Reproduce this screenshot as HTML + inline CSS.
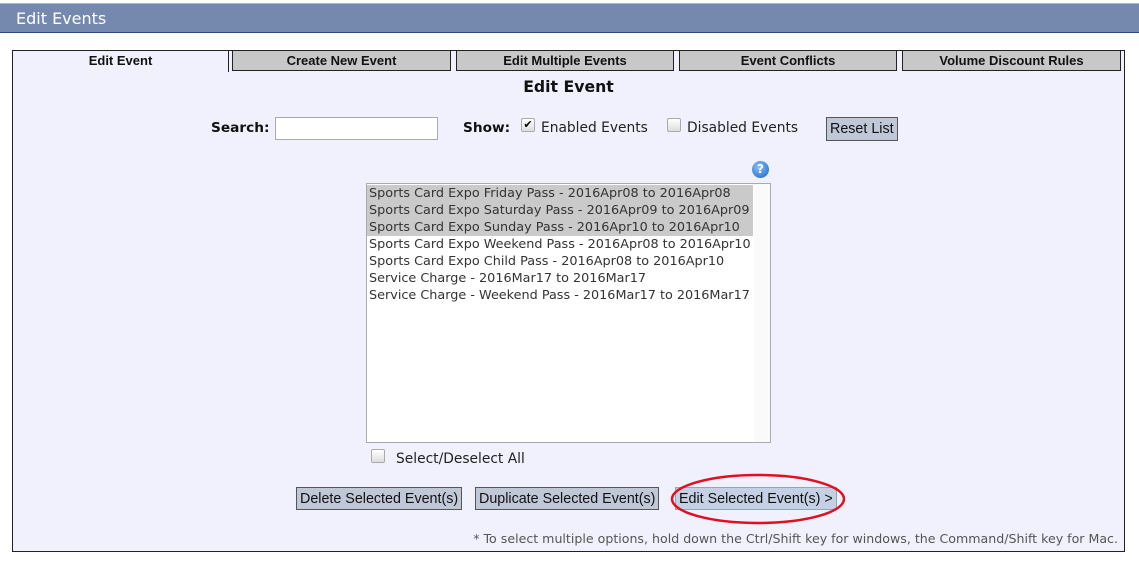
<!DOCTYPE html>
<html><head><style>
body{margin:0;width:1139px;height:573px;background:#fff;position:relative;font-family:"DejaVu Sans",Verdana,sans-serif;overflow:hidden}
.a{position:absolute}
.hdr{left:0;top:3px;width:1139px;height:30px;background:#7589ae;border-bottom:1px solid #2a4a7a;border-top:1px solid #aab6cc;color:#fff;font-size:16px;line-height:30px;box-sizing:border-box;padding-left:16px}
.panel{left:12px;top:50px;width:1113px;height:502px;background:#f1f1fd;border:1px solid #222;box-sizing:border-box}
.tab{top:50px;height:21px;background:#c8c8c8;border:1px solid #222;box-sizing:border-box;font-family:"Liberation Sans",Arial,sans-serif;font-weight:bold;font-size:13px;text-align:center;line-height:19px;color:#111}
.act{background:#f1f1fd;border-bottom:none;height:22px}
.btn{background:#c0c8d8;border:1px solid #555;font-family:"Liberation Sans",Arial,sans-serif;font-size:14.3px;height:23px;line-height:21px;box-sizing:border-box;padding:0 3px;color:#111}
.cb{width:12px;height:12px;border:1px solid #aaa;border-radius:2px;background:linear-gradient(#fff,#ddd)}
.t{font-size:13.8px;color:#222}
</style></head><body>
<div class="a hdr">Edit Events</div>
<div class="a panel"></div>
<div class="a tab act" style="left:12px;width:217px">Edit Event</div>
<div class="a tab" style="left:232px;width:219px">Create New Event</div>
<div class="a tab" style="left:456px;width:218px">Edit Multiple Events</div>
<div class="a tab" style="left:679px;width:218px">Event Conflicts</div>
<div class="a tab" style="left:902px;width:219px">Volume Discount Rules</div>
<div class="a" style="left:12px;width:1113px;top:77px;text-align:center;font-weight:bold;font-size:15.7px;color:#111">Edit Event</div>
<div class="a" style="left:211px;top:120px;font-weight:bold;font-size:13.7px;color:#111">Search:</div>
<div class="a" style="left:275px;top:117px;width:163px;height:23px;border:1px solid #aaa;background:#fff;box-sizing:border-box"></div>
<div class="a" style="left:463px;top:120px;font-weight:bold;font-size:13.7px;color:#111">Show:</div>
<div class="a cb" style="left:521px;top:118px;font-size:11px;line-height:12px;text-align:center">✔</div>
<div class="a t" style="left:541px;top:120px">Enabled Events</div>
<div class="a cb" style="left:667px;top:118px"></div>
<div class="a t" style="left:687px;top:120px">Disabled Events</div>
<div class="a btn" style="left:826px;top:117px;height:24px;line-height:23px">Reset List</div>
<div class="a" style="left:752px;top:161px;width:17px;height:17px;border-radius:50%;background:radial-gradient(circle at 40% 35%,#8ac0ff,#1a5fc0);color:#fff;font-size:12px;font-weight:bold;text-align:center;line-height:17px">?</div>
<div class="a" style="left:366px;top:183px;width:405px;height:260px;border:1px solid #aaa;background:#fff;box-sizing:border-box;font-size:12.8px;color:#333;line-height:17px;overflow:hidden;padding-top:1px">
<div style="background:#cacaca;width:384px;padding-left:2px;white-space:nowrap">Sports Card Expo Friday Pass - 2016Apr08 to 2016Apr08</div>
<div style="background:#cacaca;width:384px;padding-left:2px;white-space:nowrap;overflow:hidden">Sports Card Expo Saturday Pass - 2016Apr09 to 2016Apr09</div>
<div style="background:#cacaca;width:384px;padding-left:2px;white-space:nowrap">Sports Card Expo Sunday Pass - 2016Apr10 to 2016Apr10</div>
<div style="padding-left:2px;white-space:nowrap">Sports Card Expo Weekend Pass - 2016Apr08 to 2016Apr10</div>
<div style="padding-left:2px;white-space:nowrap">Sports Card Expo Child Pass - 2016Apr08 to 2016Apr10</div>
<div style="padding-left:2px;white-space:nowrap">Service Charge - 2016Mar17 to 2016Mar17</div>
<div style="padding-left:2px;white-space:nowrap">Service Charge - Weekend Pass - 2016Mar17 to 2016Mar17</div>
<div class="a" style="right:0;top:0;width:16px;height:258px;background:#fafafa"></div>
</div>
<div class="a cb" style="left:371px;top:449px"></div>
<div class="a t" style="left:396px;top:451px">Select/Deselect All</div>
<div class="a btn" style="left:296px;top:487px;line-height:22px">Delete Selected Event(s)</div>
<div class="a btn" style="left:475px;top:487px;line-height:22px">Duplicate Selected Event(s)</div>
<div class="a btn" style="left:675px;top:487px;line-height:22px;border-color:#8ab;background:#c6d0e4">Edit Selected Event(s) &gt;</div>
<svg class="a" style="left:668px;top:470px" width="182" height="56"><ellipse cx="90" cy="29" rx="86" ry="24" fill="none" stroke="#e01020" stroke-width="2.5"/></svg>
<div class="a" style="right:21px;top:531px;font-size:12.6px;color:#555;white-space:nowrap">* To select multiple options, hold down the Ctrl/Shift key for windows, the Command/Shift key for Mac.</div>
</body></html>
